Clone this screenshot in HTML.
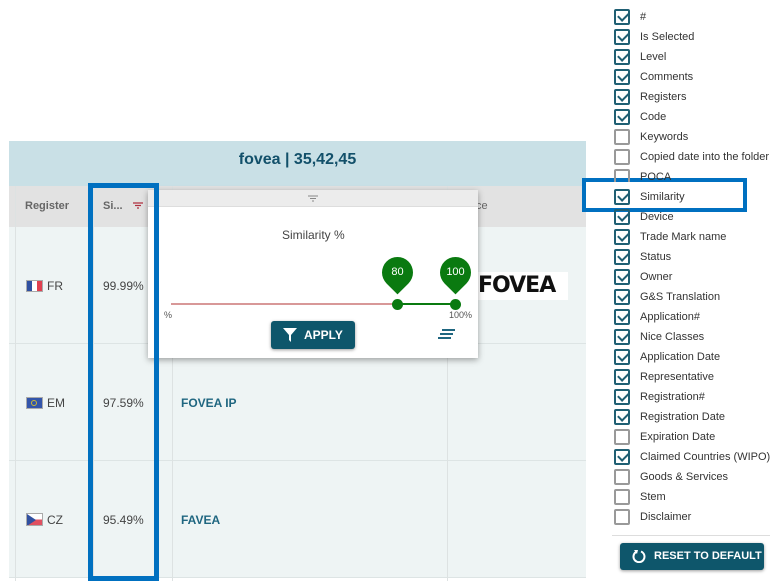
<!DOCTYPE html>
<html><head><style>
*{margin:0;padding:0;box-sizing:border-box}
body{width:784px;height:586px;background:#fff;font-family:"Liberation Sans",sans-serif;position:relative;overflow:hidden;color:#333}
.a{position:absolute}
.band{left:9px;top:141px;width:577px;height:45px;background:#c9e0e6;color:#12506a;font-weight:bold;font-size:16px;text-align:center;line-height:38px}
.hdr{left:9px;top:186px;width:577px;height:41px;background:#e2e2e2}
.row{left:9px;width:577px;height:117px;background:#eef4f4;border-bottom:1px solid #dde4e4}
.vl{width:1px;background:#dde2e2;top:186px;height:395px}
.t{font-size:12px;color:#444}
.lnk{font-size:12px;color:#1f6680;font-weight:bold}
.cb{left:614px;width:16px;height:16px;border:2px solid #999;border-radius:2px}
.cb.on{border-color:#1f5f73}
.cb.on::after{content:"";position:absolute;left:4px;top:-1px;width:5px;height:9px;border:solid #1f5f73;border-width:0 2px 2px 0;transform:rotate(45deg)}
.lb{left:640px;font-size:11px;color:#333;white-space:nowrap}
.btn{background:#0e566b;color:#fff;font-weight:bold;font-size:12px;border-radius:3px;box-shadow:0 1px 3px rgba(0,0,0,.4);white-space:nowrap}
</style></head><body>
<div class="a band">fovea | 35,42,45</div>
<div class="a hdr"></div>
<div class="a row" style="top:227px"></div>
<div class="a row" style="top:344px"></div>
<div class="a row" style="top:461px"></div>
<div class="a vl" style="left:15px"></div>
<div class="a vl" style="left:93px"></div>
<div class="a vl" style="left:172px"></div>
<div class="a vl" style="left:447px"></div>
<div class="a t" style="left:25px;top:200px;color:#666;font-weight:bold;font-size:11px">Register</div>
<div class="a t" style="left:103px;top:200px;color:#666;font-weight:bold;font-size:11px">Si...</div>
<svg class="a" style="left:133px;top:202px" width="10" height="7"><path d="M0 1H10M2 3.5H8M4 6H6" stroke="#b03040" stroke-width="1.2"/></svg>
<div class="a t" style="left:476px;top:200px;color:#666;font-size:11px">ce</div>
<div class="a" style="left:26px;top:280px;width:17px;height:12px;background:linear-gradient(90deg,#3050a0 33%,#fff 33% 66%,#e04050 66%);border:1px solid #aaa"></div>
<div class="a t" style="left:47px;top:279px">FR</div>
<div class="a" style="left:26px;top:397px;width:17px;height:12px;background:#3355aa;border:1px solid #aaa"><div class="a" style="left:4px;top:2px;width:6px;height:6px;border:1px solid #cb3;border-radius:50%"></div></div>
<div class="a t" style="left:47px;top:396px">EM</div>
<div class="a" style="left:26px;top:513px;width:17px;height:13px;background:linear-gradient(#fff 50%,#e05060 50%);border:1px solid #aaa;overflow:hidden"><div style="width:0;height:0;border-top:6px solid transparent;border-bottom:6px solid transparent;border-left:9px solid #3050a0"></div></div>
<div class="a t" style="left:47px;top:513px">CZ</div>
<div class="a t" style="left:103px;top:279px">99.99%</div>
<div class="a t" style="left:103px;top:396px">97.59%</div>
<div class="a t" style="left:103px;top:513px">95.49%</div>
<div class="a lnk" style="left:181px;top:396px">FOVEA IP</div>
<div class="a lnk" style="left:181px;top:513px">FAVEA</div>
<div class="a" style="left:478px;top:272px;width:90px;height:28px;background:#fff;font-size:22px;font-weight:bold;color:#111;line-height:28px;font-family:'DejaVu Sans',sans-serif;letter-spacing:-1px">FOVEA</div>
<div class="a" style="left:148px;top:190px;width:330px;height:168px;background:#fff;box-shadow:0 2px 6px rgba(0,0,0,.35)">
 <div style="height:17px;background:#ececec;border-bottom:1px solid #ddd"></div>
 <svg class="a" style="left:160px;top:5px" width="10" height="7"><path d="M0 1H10M2 3.5H8M4 6H6" stroke="#888" stroke-width="1"/></svg>
 <div class="a t" style="left:134px;top:38px;font-size:12px">Similarity %</div>
 <div class="a" style="left:23px;top:113px;width:226px;height:2px;background:#d89898"></div>
 <div class="a" style="left:249px;top:113px;width:58px;height:2px;background:#0a7a10"></div>
 <div class="a" style="left:244px;top:109px;width:11px;height:11px;border-radius:50%;background:#0a7a10"></div>
 <div class="a" style="left:302px;top:109px;width:11px;height:11px;border-radius:50%;background:#0a7a10"></div>
 <div class="a" style="left:234px;top:67px;width:31px;height:31px;border-radius:50% 50% 50% 0;transform:rotate(-45deg);background:#0a7a10"></div>
 <div class="a" style="left:234px;top:76px;width:31px;color:#fff;font-size:11px;text-align:center">80</div>
 <div class="a" style="left:292px;top:67px;width:31px;height:31px;border-radius:50% 50% 50% 0;transform:rotate(-45deg);background:#0a7a10"></div>
 <div class="a" style="left:292px;top:76px;width:31px;color:#fff;font-size:11px;text-align:center">100</div>
 <div class="a" style="left:16px;top:120px;font-size:9px;color:#555">%</div>
 <div class="a" style="left:301px;top:120px;font-size:9px;color:#555">100%</div>
 <div class="a btn" style="left:123px;top:131px;width:84px;height:28px;line-height:28px;padding-left:33px">APPLY</div>
 <svg class="a" style="left:135px;top:138px" width="14" height="14"><path d="M0 0H14L8 7V14L6 12V7Z" fill="#fff"/></svg>
 <svg class="a" style="left:290px;top:138px" width="18" height="12"><path d="M4 2H17M2 6H15M0 10H13" stroke="#1f6680" stroke-width="2"/></svg>
</div>
<div class="a" style="left:88px;top:183px;width:71px;height:398px;border:5px solid #0070c0"></div>
<div class="a" style="left:582px;top:178px;width:165px;height:34px;border:4px solid #0070c0"></div>
<div class="a cb on" style="top:9px"></div><div class="a lb" style="top:11px">#</div>
<div class="a cb on" style="top:29px"></div><div class="a lb" style="top:31px">Is Selected</div>
<div class="a cb on" style="top:49px"></div><div class="a lb" style="top:51px">Level</div>
<div class="a cb on" style="top:69px"></div><div class="a lb" style="top:71px">Comments</div>
<div class="a cb on" style="top:89px"></div><div class="a lb" style="top:91px">Registers</div>
<div class="a cb on" style="top:109px"></div><div class="a lb" style="top:111px">Code</div>
<div class="a cb" style="top:129px"></div><div class="a lb" style="top:131px">Keywords</div>
<div class="a cb" style="top:149px"></div><div class="a lb" style="top:151px">Copied date into the folder</div>
<div class="a cb" style="top:169px"></div><div class="a lb" style="top:171px">POCA</div>
<div class="a" style="left:586px;top:182px;width:157px;height:26px;background:#fff"></div>
<div class="a cb on" style="top:189px"></div><div class="a lb" style="top:191px">Similarity</div>
<div class="a cb on" style="top:209px"></div><div class="a lb" style="top:211px">Device</div>
<div class="a cb on" style="top:229px"></div><div class="a lb" style="top:231px">Trade Mark name</div>
<div class="a cb on" style="top:249px"></div><div class="a lb" style="top:251px">Status</div>
<div class="a cb on" style="top:269px"></div><div class="a lb" style="top:271px">Owner</div>
<div class="a cb on" style="top:289px"></div><div class="a lb" style="top:291px">G&amp;S Translation</div>
<div class="a cb on" style="top:309px"></div><div class="a lb" style="top:311px">Application#</div>
<div class="a cb on" style="top:329px"></div><div class="a lb" style="top:331px">Nice Classes</div>
<div class="a cb on" style="top:349px"></div><div class="a lb" style="top:351px">Application Date</div>
<div class="a cb on" style="top:369px"></div><div class="a lb" style="top:371px">Representative</div>
<div class="a cb on" style="top:389px"></div><div class="a lb" style="top:391px">Registration#</div>
<div class="a cb on" style="top:409px"></div><div class="a lb" style="top:411px">Registration Date</div>
<div class="a cb" style="top:429px"></div><div class="a lb" style="top:431px">Expiration Date</div>
<div class="a cb on" style="top:449px"></div><div class="a lb" style="top:451px">Claimed Countries (WIPO)</div>
<div class="a cb" style="top:469px"></div><div class="a lb" style="top:471px">Goods &amp; Services</div>
<div class="a cb" style="top:489px"></div><div class="a lb" style="top:491px">Stem</div>
<div class="a cb" style="top:509px"></div><div class="a lb" style="top:511px">Disclaimer</div>
<div class="a" style="left:612px;top:535px;width:158px;height:1px;background:#ddd"></div>
<div class="a btn" style="left:620px;top:543px;width:144px;height:27px;line-height:27px;padding-left:34px;font-size:11px">RESET TO DEFAULT</div>
<svg class="a" style="left:632px;top:549px" width="14" height="14"><path d="M4 3A5.5 5.5 0 1 0 9 2.5" fill="none" stroke="#fff" stroke-width="2"/><path d="M2 1L6 1L5 5Z" fill="#fff"/></svg>
</body></html>
